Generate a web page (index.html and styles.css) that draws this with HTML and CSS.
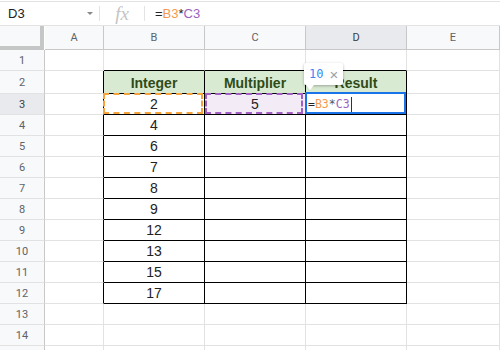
FILE: index.html
```html
<!DOCTYPE html>
<html lang="en">
<head>
    <meta charset="UTF-8">
    <title>Sheet</title>
    <link rel="stylesheet" href="styles.css">
</head>
<body>
    <!-- Barra formula -->
    <div class="formula-bar">
        <div class="name-box">
            <span>D3</span>
            <span class="caret"></span>
        </div>
        <div class="fx">fx</div>
        <div class="formula"><span>=</span><span class="ref-b">B3</span><span>*</span><span class="ref-c">C3</span></div>
    </div>

    <div class="sheet">
        <div class="corner"></div>
        <div class="col-head">A</div>
        <div class="col-head">B</div>
        <div class="col-head">C</div>
        <div class="col-head active">D</div>
        <div class="col-head">E</div>

        <div class="row-head">1</div>
        <div class="cell"></div>
        <div class="cell above"></div>
        <div class="cell above"></div>
        <div class="cell above"></div>
        <div class="cell"></div>

        <div class="row-head tall">2</div>
        <div class="cell edge"></div>
        <div class="cell tbl head">Integer</div>
        <div class="cell tbl head">Multiplier</div>
        <div class="cell tbl head">Result</div>
        <div class="cell"></div>

        <div class="row-head active">3</div>
        <div class="cell edge"></div>
        <div class="cell tbl range-b">2</div>
        <div class="cell tbl range-c">5</div>
        <div class="cell tbl editing">
            <span class="edit-text"><span>=</span><span class="ref-b">B3</span><span class="op">*</span><span class="ref-c">C3</span><span class="cursor"></span></span>
            <div class="tip"><span class="tip-val">10</span><span class="tip-x">×</span></div>
        </div>
        <div class="cell"></div>

        <div class="row-head">4</div>
        <div class="cell edge"></div>
        <div class="cell tbl">4</div>
        <div class="cell tbl"></div>
        <div class="cell tbl"></div>
        <div class="cell"></div>

        <div class="row-head">5</div>
        <div class="cell edge"></div>
        <div class="cell tbl">6</div>
        <div class="cell tbl"></div>
        <div class="cell tbl"></div>
        <div class="cell"></div>

        <div class="row-head">6</div>
        <div class="cell edge"></div>
        <div class="cell tbl">7</div>
        <div class="cell tbl"></div>
        <div class="cell tbl"></div>
        <div class="cell"></div>

        <div class="row-head">7</div>
        <div class="cell edge"></div>
        <div class="cell tbl">8</div>
        <div class="cell tbl"></div>
        <div class="cell tbl"></div>
        <div class="cell"></div>

        <div class="row-head">8</div>
        <div class="cell edge"></div>
        <div class="cell tbl">9</div>
        <div class="cell tbl"></div>
        <div class="cell tbl"></div>
        <div class="cell"></div>

        <div class="row-head">9</div>
        <div class="cell edge"></div>
        <div class="cell tbl">12</div>
        <div class="cell tbl"></div>
        <div class="cell tbl"></div>
        <div class="cell"></div>

        <div class="row-head">10</div>
        <div class="cell edge"></div>
        <div class="cell tbl">13</div>
        <div class="cell tbl"></div>
        <div class="cell tbl"></div>
        <div class="cell"></div>

        <div class="row-head">11</div>
        <div class="cell edge"></div>
        <div class="cell tbl">15</div>
        <div class="cell tbl"></div>
        <div class="cell tbl"></div>
        <div class="cell"></div>

        <div class="row-head">12</div>
        <div class="cell edge"></div>
        <div class="cell tbl">17</div>
        <div class="cell tbl"></div>
        <div class="cell tbl"></div>
        <div class="cell"></div>

        <div class="row-head">13</div>
        <div class="cell"></div>
        <div class="cell"></div>
        <div class="cell"></div>
        <div class="cell"></div>
        <div class="cell"></div>

        <div class="row-head">14</div>
        <div class="cell"></div>
        <div class="cell"></div>
        <div class="cell"></div>
        <div class="cell"></div>
        <div class="cell"></div>

        <div class="row-head"></div>
        <div class="cell"></div>
        <div class="cell"></div>
        <div class="cell"></div>
        <div class="cell"></div>
        <div class="cell"></div>
    </div>
</body>
</html>
```

FILE: styles.css
```css
body {
    margin: 0;
    padding-top: 1px;
    background: #fff;
    font-family: 'Liberation Sans', Arial, sans-serif;
    color: #202124;
    overflow: hidden;
}

.formula-bar {
    height: 25px;
    box-sizing: border-box;
    display: flex;
    align-items: center;
    border-top: 1px solid #e3e3e3;
    border-bottom: 1px solid #e3e3e3;
}

.name-box {
    width: 100px;
    box-sizing: border-box;
    display: flex;
    align-items: center;
    justify-content: space-between;
    padding: 0 6px 0 8px;
    font-size: 13px;
    border-right: 1px solid #e3e3e3;
    height: 15px;
}

.caret {
    width: 0;
    height: 0;
    border-left: 3px solid transparent;
    border-right: 3px solid transparent;
    border-top: 3px solid #888;
}

.fx {
    width: 45px;
    box-sizing: border-box;
    height: 15px;
    display: flex;
    align-items: center;
    justify-content: center;
    font-family: 'Liberation Serif', serif;
    font-style: italic;
    font-size: 19px;
    color: #c4c4c4;
    border-right: 1px solid #e3e3e3;
}

.formula {
    padding-left: 10px;
    font-size: 13px;
    color: #202124;
}

.ref-b {
    color: #f49a4e;
}

.ref-c {
    color: #9b63c0;
}

.sheet {
    display: grid;
    grid-template-columns: 45px 59px 101px 101px 101px 1fr;
    grid-template-rows: 24px 21px 23px repeat(12, 21px) 21px;
}

.sheet > div {
    box-sizing: border-box;
}

.corner {
    background: #f8f9fa;
    border-right: 4px solid #c4c7c5;
    border-bottom: 4px solid #c4c7c5;
    margin-right: 1px;
}

.col-head {
    background: #f8f9fa;
    border-right: 1px solid #c8c8c8;
    border-bottom: 1px solid #c8c8c8;
    font-family: Roboto, sans-serif;
    font-size: 11px;
    color: #5f6368;
    display: flex;
    align-items: center;
    justify-content: center;
}

.row-head {
    background: #f8f9fa;
    border-right: 1px solid #c8c8c8;
    border-bottom: 1px solid #e2e2e2;
    font-family: Roboto, sans-serif;
    font-size: 11px;
    color: #5f6368;
    display: flex;
    align-items: center;
    justify-content: center;
}

.col-head.active,
.row-head.active {
    background: #e8eaed;
    color: #3c4043;
}

.cell {
    border-right: 1px solid #e2e2e2;
    border-bottom: 1px solid #e2e2e2;
    font-size: 14px;
    color: #222;
    display: flex;
    align-items: center;
    justify-content: center;
    position: relative;
}

.cell.edge {
    border-right-color: #000;
}

.cell.above {
    border-bottom-color: #000;
}

.cell.tbl {
    border-right-color: #000;
    border-bottom-color: #000;
}

.cell.head {
    background: #d9ead3;
    font-weight: bold;
    color: #2f4a18;
    padding-top: 1px;
}

/* riferimenti evidenziati */
.range-b::after {
    content: '';
    position: absolute;
    top: -1px;
    left: -1px;
    right: 1px;
    bottom: 0;
    border: 2px dashed #f6a33c;
}

.range-c {
    background: #f3ebf6;
}

.range-c::after {
    content: '';
    position: absolute;
    top: -1px;
    left: 0;
    right: 2px;
    bottom: 0;
    border: 2px dashed #a35fc4;
}

.editing {
    justify-content: flex-start;
}

.editing::after {
    content: '';
    position: absolute;
    top: -2px;
    left: -1px;
    right: 0;
    bottom: 0;
    border: 2px solid #1a73e8;
}

.edit-text {
    padding-left: 2px;
    font-family: 'DejaVu Sans Mono', monospace;
    font-size: 11.5px;
    color: #222;
    display: flex;
    align-items: center;
}

.op {
    color: #555;
}

.cursor {
    width: 1px;
    height: 15px;
    background: #333;
    margin-left: 1px;
}

.tip {
    position: absolute;
    left: -2px;
    top: -31px;
    width: 39px;
    height: 22px;
    background: #fff;
    border-radius: 2px;
    box-shadow: 0 1px 3px rgba(0, 0, 0, 0.3);
    display: flex;
    align-items: center;
    gap: 6px;
    padding-left: 5px;
    box-sizing: border-box;
    z-index: 2;
}

.tip::after {
    content: '';
    position: absolute;
    left: 2px;
    bottom: -5px;
    border-left: 4px solid transparent;
    border-right: 4px solid transparent;
    border-top: 5px solid #fff;
}

.tip-val {
    font-family: 'DejaVu Sans Mono', monospace;
    font-size: 12px;
    color: #4285f4;
}

.tip-x {
    font-size: 15px;
    color: #9aa0a6;
}
```
